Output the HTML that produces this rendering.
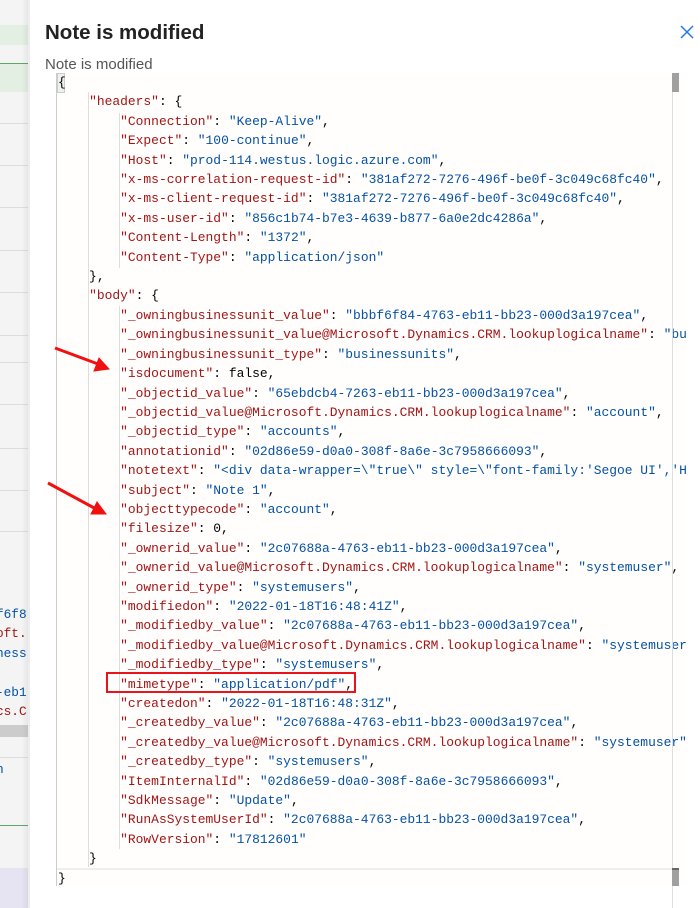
<!DOCTYPE html>
<html><head><style>
body{margin:0;width:700px;height:908px;overflow:hidden;background:#fff;position:relative;font-family:"Liberation Sans",sans-serif}
#left{position:absolute;left:0;top:0;width:28px;height:908px;background:#f4f4f4;overflow:hidden}
#left div{position:absolute;left:0;width:28px}
#shadow{position:absolute;left:22px;top:0;width:8px;height:908px;background:linear-gradient(90deg,rgba(0,0,0,0),rgba(0,0,0,.08))}
h1{position:absolute;left:45px;top:21px;margin:0;font-size:20.5px;font-weight:600;color:#222}
.sub{position:absolute;left:45px;top:56px;font-size:15px;color:#555}
.x{position:absolute;left:680px;top:25px}
#ed{position:absolute;left:56px;top:73px;width:630px;height:813px;border-left:1px solid #ccc;overflow:hidden;background:#fffefd}
pre{margin:0;position:absolute;left:1px;top:0;font-family:"Liberation Mono",monospace;font-size:12.95px;line-height:19.4px;color:#000;white-space:pre}
.k{color:#a31515}.s{color:#0451a5}
.g{position:absolute;width:1px;background:#ddd}
#sb{position:absolute;left:672px;top:73px;width:1px;height:835px;background:#ddd}
</style></head><body>
<div id="left">
<div style="top:25px;height:20px;background:#e4efe4"></div>
<div style="top:63px;height:28px;background:#e4efe4;border-top:1px solid #5ca86b"></div>
<div style="top:123px;height:1px;background:#ddd"></div>
<div style="top:165px;height:1px;background:#ddd"></div>
<div style="top:207px;height:1px;background:#ddd"></div>
<div style="top:250px;height:1px;background:#ddd"></div>
<div style="top:292px;height:1px;background:#ddd"></div>
<div style="top:335px;height:1px;background:#ddd"></div>
<div style="top:362px;height:1px;background:#ddd"></div>
<div style="top:404px;height:1px;background:#ddd"></div>
<div style="top:448px;height:1px;background:#ddd"></div>
<div style="top:490px;height:1px;background:#ddd"></div>
<div style="top:531px;height:1px;background:#ddd"></div>
<div style="top:725px;height:12px;background:#ccc"></div>
<div style="top:757px;height:1px;background:#ddd"></div>
<div style="top:825px;height:1px;background:#5ca86b"></div>
<div style="top:868px;height:40px;background:#e6e4f2"></div>
<div style="top:605px;left:-4px;font:12.75px/19.4px 'Liberation Mono',monospace;white-space:pre;width:40px"><span class="s">f6f8</span>
<span class="k">oft.</span>
<span class="s">ness</span>

<span class="s">-eb1</span>
<span class="k">cs.C</span>


<span class="s">n</span></div>
</div>
<div id="shadow"></div>
<h1>Note is modified</h1>
<div class="sub">Note is modified</div>
<svg class="x" width="14" height="14" viewBox="0 0 14 14"><path d="M1 1L13 13M13 1L1 13" stroke="#1a73e8" stroke-width="1.4"/></svg>
<div id="ed">
<div class="g" style="left:31px;top:19px;height:775px"></div>
<div class="g" style="left:62px;top:40px;height:155px"></div>
<div class="g" style="left:62px;top:233px;height:543px"></div>
<div style="position:absolute;left:0;top:795px;width:617px;height:16px;border-top:2px solid #eee;border-bottom:2px solid #eee"></div>
<div style="position:absolute;left:0;top:0;width:8px;height:20px;background:#eef2ee;border:1px solid #ccc;box-sizing:border-box"></div>
<pre>{
    <span class="k">"headers"</span>: {
        <span class="k">"Connection"</span>: <span class="s">"Keep-Alive"</span>,
        <span class="k">"Expect"</span>: <span class="s">"100-continue"</span>,
        <span class="k">"Host"</span>: <span class="s">"prod-114.westus.logic.azure.com"</span>,
        <span class="k">"x-ms-correlation-request-id"</span>: <span class="s">"381af272-7276-496f-be0f-3c049c68fc40"</span>,
        <span class="k">"x-ms-client-request-id"</span>: <span class="s">"381af272-7276-496f-be0f-3c049c68fc40"</span>,
        <span class="k">"x-ms-user-id"</span>: <span class="s">"856c1b74-b7e3-4639-b877-6a0e2dc4286a"</span>,
        <span class="k">"Content-Length"</span>: <span class="s">"1372"</span>,
        <span class="k">"Content-Type"</span>: <span class="s">"application/json"</span>
    },
    <span class="k">"body"</span>: {
        <span class="k">"_owningbusinessunit_value"</span>: <span class="s">"bbbf6f84-4763-eb11-bb23-000d3a197cea"</span>,
        <span class="k">"_owningbusinessunit_value@Microsoft.Dynamics.CRM.lookuplogicalname"</span>: <span class="s">"businessunit"</span>,
        <span class="k">"_owningbusinessunit_type"</span>: <span class="s">"businessunits"</span>,
        <span class="k">"isdocument"</span>: false,
        <span class="k">"_objectid_value"</span>: <span class="s">"65ebdcb4-7263-eb11-bb23-000d3a197cea"</span>,
        <span class="k">"_objectid_value@Microsoft.Dynamics.CRM.lookuplogicalname"</span>: <span class="s">"account"</span>,
        <span class="k">"_objectid_type"</span>: <span class="s">"accounts"</span>,
        <span class="k">"annotationid"</span>: <span class="s">"02d86e59-d0a0-308f-8a6e-3c7958666093"</span>,
        <span class="k">"notetext"</span>: <span class="s">"&lt;div data-wrapper=\"true\" style=\"font-family:'Segoe UI','Helvetica'"</span>,
        <span class="k">"subject"</span>: <span class="s">"Note 1"</span>,
        <span class="k">"objecttypecode"</span>: <span class="s">"account"</span>,
        <span class="k">"filesize"</span>: 0,
        <span class="k">"_ownerid_value"</span>: <span class="s">"2c07688a-4763-eb11-bb23-000d3a197cea"</span>,
        <span class="k">"_ownerid_value@Microsoft.Dynamics.CRM.lookuplogicalname"</span>: <span class="s">"systemuser"</span>,
        <span class="k">"_ownerid_type"</span>: <span class="s">"systemusers"</span>,
        <span class="k">"modifiedon"</span>: <span class="s">"2022-01-18T16:48:41Z"</span>,
        <span class="k">"_modifiedby_value"</span>: <span class="s">"2c07688a-4763-eb11-bb23-000d3a197cea"</span>,
        <span class="k">"_modifiedby_value@Microsoft.Dynamics.CRM.lookuplogicalname"</span>: <span class="s">"systemuser"</span>,
        <span class="k">"_modifiedby_type"</span>: <span class="s">"systemusers"</span>,
        <span class="k">"mimetype"</span>: <span class="s">"application/pdf"</span>,
        <span class="k">"createdon"</span>: <span class="s">"2022-01-18T16:48:31Z"</span>,
        <span class="k">"_createdby_value"</span>: <span class="s">"2c07688a-4763-eb11-bb23-000d3a197cea"</span>,
        <span class="k">"_createdby_value@Microsoft.Dynamics.CRM.lookuplogicalname"</span>: <span class="s">"systemuser"</span>,
        <span class="k">"_createdby_type"</span>: <span class="s">"systemusers"</span>,
        <span class="k">"ItemInternalId"</span>: <span class="s">"02d86e59-d0a0-308f-8a6e-3c7958666093"</span>,
        <span class="k">"SdkMessage"</span>: <span class="s">"Update"</span>,
        <span class="k">"RunAsSystemUserId"</span>: <span class="s">"2c07688a-4763-eb11-bb23-000d3a197cea"</span>,
        <span class="k">"RowVersion"</span>: <span class="s">"17812601"</span>
    }
}</pre>
</div>
<div id="sb"></div>
<div style="position:absolute;left:672px;top:73px;width:7px;height:19px;background:#a0a0a0"></div>
<div style="position:absolute;left:672px;top:868px;width:7px;height:18px;background:#a0a0a0;border-top:2px solid #666;box-sizing:border-box"></div>
<div style="position:absolute;left:106px;top:672px;width:250px;height:21px;border:2.5px solid #e8131b;box-sizing:border-box"></div>
<svg style="position:absolute;left:0;top:0" width="700" height="908">
<g stroke="#f01010" stroke-width="3" fill="#f01010">
<line x1="55" y1="348" x2="98" y2="364"/><polygon points="109,369 94,371 99,358" stroke-width="1"/>
<line x1="48" y1="483" x2="96" y2="509"/><polygon points="106,514 91,514 97,502" stroke-width="1"/>
</g></svg>
</body></html>
